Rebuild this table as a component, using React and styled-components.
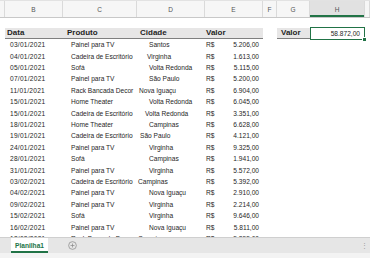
import React from 'react';
import styled, { createGlobalStyle } from 'styled-components'

const GlobalStyle = createGlobalStyle`
  html, body {
    margin: 0;
    padding: 0;
    background: #ffffff;
  }
  body {
    font-family: "Liberation Sans", Arial, sans-serif;
    color: #262626;
  }
`

const COLS = '5px 58px 74px 68px 58px 14px 33px 55px 1fr'
const GREEN = '#217346'

const Sheet = styled.div`
  width: 370px;
  height: 258px;
  display: flex;
  flex-direction: column;
  overflow: hidden;
  background: #fff;
`
const Grid = styled.div`
  flex: 1;
  overflow: hidden;
  display: flex;
  flex-direction: column;
`
const ColumnHeaders = styled.div`
  display: grid;
  grid-template-columns: ${COLS};
  height: 16px;
  flex-shrink: 0;
  background: #f6f6f6;
  border-top: 1px solid #e2e2e2;
  border-bottom: 1px solid #c8c8c8;
`
const ColumnLetter = styled.div`
  display: flex;
  align-items: center;
  justify-content: center;
  font-size: 6.5px;
  color: #555;
  border-right: 1px solid #dadada;
  background: ${p => (p.$selected ? '#e1e1e1' : 'transparent')};
  box-shadow: ${p => (p.$selected ? `inset 0 -2px 0 ${GREEN}` : 'none')};
`
const Spacer = styled.div`
  height: 9.6px;
  flex-shrink: 0;
`
const Row = styled.div`
  display: grid;
  grid-template-columns: ${COLS};
  height: 11.41px;
  flex-shrink: 0;
`
const Cell = styled.div`
  display: flex;
  align-items: center;
  white-space: nowrap;
  overflow: hidden;
  font-size: 6.6px;
  padding-left: ${p => p.$indent || 0}px;
  letter-spacing: ${p => p.$spacing || 0}px;
`
const HeadCell = styled.div`
  display: flex;
  align-items: center;
  white-space: nowrap;
  font-size: 8px;
  font-weight: bold;
  color: #1f1f1f;
  background: #e7e6e6;
  border-bottom: 1px solid #7f7f7f;
  padding-left: ${p => p.$indent || 0}px;
`
const MoneyCell = styled.div`
  display: flex;
  align-items: center;
  justify-content: space-between;
  font-size: 6.6px;
  padding: 0 4px 0 1px;
`
const SelectedCell = styled.div`
  position: relative;
  display: flex;
  align-items: center;
  justify-content: flex-end;
  font-size: 6.6px;
  padding-right: 4px;
  margin: -1px 0;
  border: 1.5px solid ${GREEN};
`
const FillHandle = styled.span`
  position: absolute;
  right: -3px;
  bottom: -3px;
  width: 3px;
  height: 3px;
  background: ${GREEN};
  border: 1px solid #fff;
`
const TabBar = styled.div`
  display: flex;
  align-items: stretch;
  height: 15px;
  flex-shrink: 0;
  background: #e6e6e6;
  border-top: 1px solid #cfcfcf;
`
const TabLead = styled.div`
  width: 11px;
`
const Tab = styled.div`
  width: 37px;
  display: flex;
  align-items: center;
  justify-content: center;
  background: #fff;
  color: ${GREEN};
  font-size: 6.6px;
  font-weight: bold;
  box-shadow: inset 0 -2px 0 ${GREEN};
`
const AddSheet = styled.div`
  width: 48px;
  display: flex;
  align-items: center;
  justify-content: center;
`
const TabFill = styled.div`
  flex: 1;
  display: flex;
  align-items: center;
  justify-content: flex-end;
  padding-right: 2px;
  color: #9a9a9a;
  font-size: 7px;
`
const StatusBar = styled.div`
  height: 5px;
  flex-shrink: 0;
  background: #f3f3f3;
`

const rows = [
  ['03/01/2021', 'Painel para TV', 'Santos', 12, '5.206,00'],
  ['04/01/2021', 'Cadeira de Escritório', 'Virginha', 10, '1.613,00'],
  ['05/01/2021', 'Sofá', 'Volta Redonda', 12, '5.115,00'],
  ['07/01/2021', 'Painel para TV', 'São Paulo', 12, '5.200,00'],
  ['11/01/2021', 'Rack Bancada Decor', 'Nova Iguaçu', 2, '6.904,00'],
  ['15/01/2021', 'Home Theater', 'Volta Redonda', 12, '6.045,00'],
  ['15/01/2021', 'Cadeira de Escritório', 'Volta Redonda', 8, '3.351,00'],
  ['18/01/2021', 'Home Theater', 'Campinas', 12, '6.628,00'],
  ['19/01/2021', 'Cadeira de Escritório', 'São Paulo', 3, '4.121,00'],
  ['24/01/2021', 'Painel para TV', 'Virginha', 12, '9.325,00'],
  ['28/01/2021', 'Sofá', 'Campinas', 12, '1.941,00'],
  ['31/01/2021', 'Painel para TV', 'Virginha', 12, '5.572,00'],
  ['03/02/2021', 'Cadeira de Escritório', 'Campinas', 1, '5.392,00'],
  ['04/02/2021', 'Painel para TV', 'Nova Iguaçu', 12, '2.910,00'],
  ['09/02/2021', 'Painel para TV', 'Virginha', 12, '2.214,00'],
  ['15/02/2021', 'Sofá', 'Virginha', 12, '9.646,00'],
  ['16/02/2021', 'Painel para TV', 'Nova Iguaçu', 12, '5.811,00'],
  ['18/02/2021', 'Rack Bancada Decor', 'Campinas', 1, '9.399,00'],
]

const letters = ['', 'B', 'C', 'D', 'E', 'F', 'G', 'H', '']

const PlusIcon = () => (
  <svg width="9" height="9" viewBox="0 0 10 10">
    <circle cx="5" cy="5" r="4.3" fill="none" stroke="#8a8a8a" strokeWidth="0.8" />
    <path d="M5 2.8v4.4M2.8 5h4.4" stroke="#8a8a8a" strokeWidth="0.8" />
  </svg>
)

const App = () => {
  return (
    <Sheet>
      <GlobalStyle />
      <Grid>
        <ColumnHeaders>
          {letters.map((l, i) => (
            <ColumnLetter key={i} $selected={l === 'H'}>{l}</ColumnLetter>
          ))}
        </ColumnHeaders>
        <Spacer />
        <Row>
          <div />
          <HeadCell $indent={2}>Data</HeadCell>
          <HeadCell $indent={4}>Produto</HeadCell>
          <HeadCell $indent={3}>Cidade</HeadCell>
          <HeadCell $indent={1}>Valor</HeadCell>
          <div />
          <HeadCell $indent={4}>Valor</HeadCell>
          <SelectedCell>
            58.872,00
            <FillHandle />
          </SelectedCell>
          <div />
        </Row>
        {rows.map((r, i) => (
          <Row key={i}>
            <div />
            <Cell $indent={5} $spacing={0.25}>{r[0]}</Cell>
            <Cell $indent={8}>{r[1]}</Cell>
            <Cell $indent={r[3]}>{r[2]}</Cell>
            <MoneyCell>
              <span>R$</span>
              <span>{r[4]}</span>
            </MoneyCell>
          </Row>
        ))}
      </Grid>
      <TabBar>
        <TabLead />
        <Tab>Planilha1</Tab>
        <AddSheet>
          <PlusIcon />
        </AddSheet>
        <TabFill>⋮</TabFill>
      </TabBar>
      <StatusBar />
    </Sheet>
  )
}

export default App
